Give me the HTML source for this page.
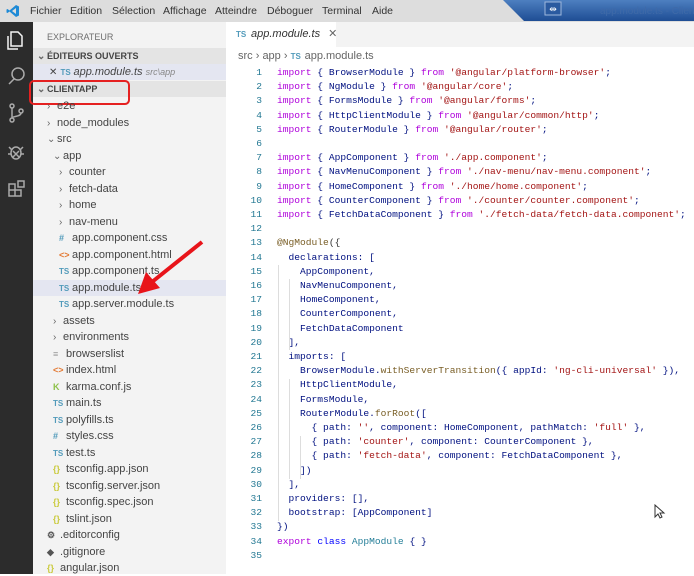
<!DOCTYPE html>
<html><head><meta charset="utf-8"><style>
*{margin:0;padding:0;box-sizing:border-box}
body{width:694px;height:574px;overflow:hidden;background:#fff;font-family:"Liberation Sans",sans-serif;position:relative}
.title{position:absolute;left:0;top:0;width:694px;height:22px;background:#dddddd;font-size:10.5px;color:#333}
.title span{position:absolute;top:5px}
.act{position:absolute;left:0;top:22px;width:33px;height:552px;background:#2c2c2c}
.side{position:absolute;left:33px;top:22px;width:193px;height:552px;background:#f3f3f3;font-size:11px;color:#444}
.row{position:absolute;left:0;width:193px;height:16px;line-height:16px;white-space:nowrap}
.ed{position:absolute;left:226px;top:22px;width:468px;height:552px;background:#fff}
.code{position:absolute;left:0;top:45px;font-family:"Liberation Mono",monospace;font-size:9.6px;color:#001080}
.ln{position:absolute;width:36px;text-align:right;color:#237893}
.cl{position:absolute;left:51px;white-space:pre;color:#001080}
.k{color:#af00db}.s{color:#a31515}.b{color:#0000ff}.p{color:#333}.f{color:#795e26}.t{color:#267f99}.d{color:#795e26}
.ic{display:inline-block;width:13px;font-size:8px;font-weight:bold;color:#519aba}
.chev{display:inline-block;width:10px;color:#666;font-size:10px}
</style></head><body>
<div class="title">
<svg style="position:absolute;left:6px;top:4px" width="14" height="14" viewBox="0 0 14 14"><path d="M10 1 L13 2.5 V11.5 L10 13 L3.5 7.5 L1.5 9 L0.5 8.5 V5.5 L1.5 5 L3.5 6.5 Z M10 4 L6 7 L10 10 Z" fill="#1e8ad6" fill-rule="evenodd"/></svg>
<span style="left:30px">Fichier</span><span style="left:70px">Edition</span><span style="left:112px">Sélection</span><span style="left:163px">Affichage</span><span style="left:215px">Atteindre</span><span style="left:267px">Déboguer</span><span style="left:322px">Terminal</span><span style="left:372px">Aide</span>
<svg style="position:absolute;left:500px;top:0" width="194" height="21"><defs><linearGradient id="g" x1="0" y1="0" x2="0" y2="1"><stop offset="0" stop-color="#4d7fc0"/><stop offset="1" stop-color="#1e4d94"/></linearGradient></defs><path d="M3 0 H194 V21 H24 Z" fill="url(#g)"/><rect x="45" y="2" width="16" height="13" fill="#2a5aa0" stroke="#9fb8dc"/><text x="53" y="12" font-size="9" fill="#fff" text-anchor="middle" font-family="Liberation Sans">⇹</text><text x="100" y="14" font-size="10" fill="#3f6aa8" font-family="Liberation Sans">app.module.ts - ClientApp</text></svg>
</div>
<div class="act">
<svg width="33" height="200" viewBox="0 0 33 200" fill="none" stroke="#fff" stroke-width="1.5"><path d="M11 10h7l4 4v10h-11z M8 14v13h10" opacity=".95"/><g opacity=".6"><circle cx="18" cy="52" r="6"/><path d="M14 57l-5 5"/><circle cx="12" cy="84" r="2"/><circle cx="12" cy="98" r="2"/><circle cx="21" cy="89" r="2"/><path d="M12 86v10M21 91c0 4-9 3-9 5"/><ellipse cx="16" cy="131" rx="5" ry="6"/><path d="M9 125l3 3M23 125l-3 3M8 132h3M21 132h3M13 129l6 6M19 129l-6 6"/><path d="M9 162h6v6h-6zM9 168h6v6h-6zM15 168h6v6h-6zM18 159h6v6h-6z"/></g></svg>
</div>
<div class="side">
<div class="row" style="top:7px;left:14px;font-size:9px;color:#6f6f6f">EXPLORATEUR</div>
<div class="row" style="top:26px;background:#e4e4e4;font-size:9px;font-weight:bold;padding-left:4px"><span class="chev">⌄</span>ÉDITEURS OUVERTS</div>
<div class="row" style="top:42px;background:#e4e6f1;padding-left:16px"><span style="font-size:10px">✕</span> <span class="ic">TS</span><i>app.module.ts</i> <i style="font-size:9px;color:#888">src\app</i></div>
<div class="row" style="top:59px;background:#e4e4e4;font-size:9px;font-weight:bold;padding-left:4px"><span class="chev">⌄</span>CLIENTAPP</div>
<div style="position:absolute;left:-4px;top:58px;width:101px;height:25px;border:2px solid #e52020;border-radius:5px"></div>
<div id="tree"></div>
</div>
<svg style="position:absolute;left:130px;top:238px" width="80" height="60"><path d="M72 4 L22 44" stroke="#e8141a" stroke-width="4"/><path d="M8 56 L16 34 L30 50 Z" fill="#e8141a"/></svg>
<div class="ed">
<div style="position:absolute;left:0;top:0;width:468px;height:25px;background:#f3f3f3"></div>
<div style="position:absolute;left:0;top:0;width:110px;height:25px;background:#fff;font-size:11px;line-height:25px;padding-left:10px;color:#333;white-space:nowrap"><span class="ic" style="width:15px">TS</span><i>app.module.ts</i><span style="color:#666;margin-left:8px">✕</span></div>
<div style="position:absolute;left:12px;top:28px;font-size:11px;color:#666;white-space:nowrap">src › app › <span class="ic" style="width:14px">TS</span>app.module.ts</div>
<svg style="position:absolute;left:428px;top:482px" width="12" height="16"><path d="M1 1v12l3-3 2 4 2-1-2-4h4z" fill="#fff" stroke="#333"/></svg>
<div class="code" id="code"></div>
</div>
<script>
const tree=[
[0,'›','','e2e'],[0,'›','','node_modules'],[0,'⌄','','src'],[1,'⌄','','app'],
[2,'›','','counter'],[2,'›','','fetch-data'],[2,'›','','home'],[2,'›','','nav-menu'],
[2,'','#','app.component.css'],[2,'','<>','app.component.html'],[2,'','TS','app.component.ts'],[2,'','TS','app.module.ts',1],[2,'','TS','app.server.module.ts'],
[1,'›','','assets'],[1,'›','','environments'],[1,'','≡','browserslist'],[1,'','<>','index.html'],[1,'','K','karma.conf.js'],[1,'','TS','main.ts'],[1,'','TS','polyfills.ts'],[1,'','#','styles.css'],[1,'','TS','test.ts'],[1,'','{}','tsconfig.app.json'],[1,'','{}','tsconfig.server.json'],[1,'','{}','tsconfig.spec.json'],[1,'','{}','tslint.json'],
[0,'','⚙','.editorconfig'],[0,'','◆','.gitignore'],[0,'','{}','angular.json']];
const col={'#':'#519aba','<>':'#e37933','TS':'#519aba','{}':'#cbcb41','K':'#8dc149','≡':'#999','⚙':'#555','◆':'#555'};
let h='';tree.forEach((r,i)=>{const y=76+i*16.5;let pad=14+r[0]*6;
h+=`<div class="row" style="top:${y}px;${r[4]?'background:#e4e6f1;':''}padding-left:${pad}px">`+(r[1]?`<span class="chev">${r[1]}</span>`:`<span class="ic" style="color:${col[r[2]]};font-size:${r[2]=='TS'?8:9}px">${r[2]}</span>`)+r[3]+'</div>';});
document.getElementById('tree').innerHTML=h;
const L=[
`<span class="k">import</span> { BrowserModule } <span class="k">from</span> <span class="s">'@angular/platform-browser'</span>;`,
`<span class="k">import</span> { NgModule } <span class="k">from</span> <span class="s">'@angular/core'</span>;`,
`<span class="k">import</span> { FormsModule } <span class="k">from</span> <span class="s">'@angular/forms'</span>;`,
`<span class="k">import</span> { HttpClientModule } <span class="k">from</span> <span class="s">'@angular/common/http'</span>;`,
`<span class="k">import</span> { RouterModule } <span class="k">from</span> <span class="s">'@angular/router'</span>;`,``,
`<span class="k">import</span> { AppComponent } <span class="k">from</span> <span class="s">'./app.component'</span>;`,
`<span class="k">import</span> { NavMenuComponent } <span class="k">from</span> <span class="s">'./nav-menu/nav-menu.component'</span>;`,
`<span class="k">import</span> { HomeComponent } <span class="k">from</span> <span class="s">'./home/home.component'</span>;`,
`<span class="k">import</span> { CounterComponent } <span class="k">from</span> <span class="s">'./counter/counter.component'</span>;`,
`<span class="k">import</span> { FetchDataComponent } <span class="k">from</span> <span class="s">'./fetch-data/fetch-data.component'</span>;`,``,
`<span class="d">@NgModule</span><span class="p">({</span>`,
`  declarations: [`,`    AppComponent,`,`    NavMenuComponent,`,`    HomeComponent,`,`    CounterComponent,`,`    FetchDataComponent`,`  ],`,
`  imports: [`,
`    BrowserModule.<span class="f">withServerTransition</span>({ appId: <span class="s">'ng-cli-universal'</span> }),`,
`    HttpClientModule,`,`    FormsModule,`,`    RouterModule.<span class="f">forRoot</span>([`,
`      { path: <span class="s">''</span>, component: HomeComponent, pathMatch: <span class="s">'full'</span> },`,
`      { path: <span class="s">'counter'</span>, component: CounterComponent },`,
`      { path: <span class="s">'fetch-data'</span>, component: FetchDataComponent },`,
`    ])`,`  ],`,`  providers: [],`,`  bootstrap: [AppComponent]`,`})`,
`<span class="k">export</span> <span class="b">class</span> <span class="t">AppModule</span> { }`,``];
let c='';L.forEach((l,i)=>{const y=i*14.2;c+=`<div class="ln" style="top:${y}px">${i+1}</div><div class="cl" style="top:${y}px">${l}</div>`;});
c+=`<div style="position:absolute;left:52px;top:198px;width:1px;height:256px;background:#ddd"></div><div style="position:absolute;left:63px;top:212px;width:1px;height:71px;background:#ddd"></div><div style="position:absolute;left:63px;top:312px;width:1px;height:100px;background:#ddd"></div><div style="position:absolute;left:74px;top:369px;width:1px;height:43px;background:#ddd"></div>`;
document.getElementById('code').innerHTML=c;
</script>
</body></html>
